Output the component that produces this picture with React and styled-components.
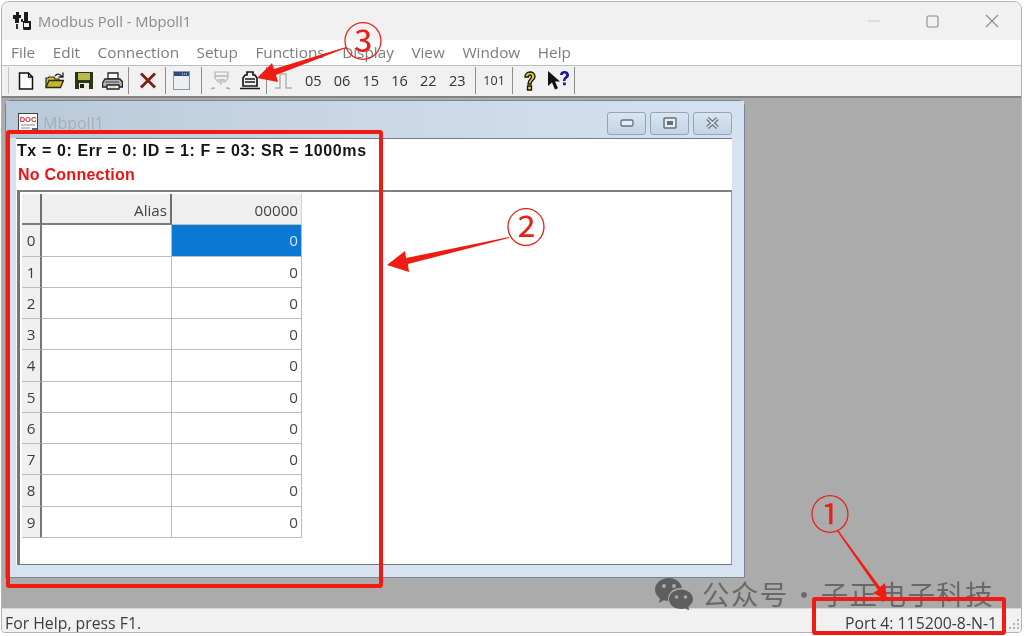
import styled, { createGlobalStyle } from "styled-components";

const GlobalStyle = createGlobalStyle`
  html, body {
    margin: 0;
    padding: 0;
    background: #fff;
    overflow: hidden;
  }
  body {
    font-family: "Open Sans", "Noto Sans", sans-serif;
  }
`;

const Page = styled.div`
  position: relative;
  width: 1025px;
  height: 636px;
  overflow: hidden;
  background: #fff;
  padding: 1px 3px 0 1px;
  box-sizing: border-box;
  filter: blur(0.45px);
`;

const AppWindow = styled.div`
  height: 632px;
  display: flex;
  flex-direction: column;
  border: 1px solid #b4b4b4;
  border-radius: 8px 8px 4px 4px;
  box-sizing: border-box;
  overflow: hidden;
  background: #f1f1f1;
`;

const TitleBar = styled.div`
  height: 38px;
  flex: none;
  display: flex;
  align-items: center;
  padding-left: 10px;
  background: #f1f1f1;
`;

const TitleText = styled.span`
  margin-left: 6px;
  font-size: 14.7px;
  color: #8b8b8b;
`;

const WindowControls = styled.div`
  margin-left: auto;
  display: flex;
  align-items: center;
  gap: 46px;
  padding-right: 22px;
`;

const MenuBar = styled.div`
  height: 26px;
  flex: none;
  display: flex;
  align-items: center;
  gap: 17.6px;
  padding: 0 0 2px 9px;
  box-sizing: border-box;
  background: #fff;
  border-bottom: 1px solid #bdbdbd;
`;

const MenuItem = styled.span`
  font-size: 15.3px;
  color: #7c7c7c;
`;

const ToolBar = styled.div`
  height: 32px;
  flex: none;
  display: flex;
  align-items: stretch;
  padding: 1px 0 2px 6px;
  box-sizing: border-box;
  background: #f1f1f1;
  border-bottom: 2px solid #838383;
`;

const ToolButton = styled.div`
  width: ${(p) => p.$w || 29}px;
  flex: none;
  display: flex;
  align-items: center;
  justify-content: center;
  font-size: ${(p) => (p.$small ? 12.5 : 14.5)}px;
  color: #333;
`;

const ToolSep = styled.div`
  width: 1px;
  flex: none;
  margin: 0 ${(p) => p.$after}px 0 ${(p) => p.$before}px;
  background: ${(p) => (p.$light ? "#c4c4c4" : "#8e8e8e")};
`;

const Desktop = styled.div`
  flex: 1;
  min-height: 0;
  background: #ababab;
  padding: 2px 0 0 3px;
`;

const ChildWindow = styled.div`
  width: 740px;
  height: 478px;
  display: flex;
  flex-direction: column;
  box-sizing: border-box;
  border: 1px solid #7a8490;
  border-radius: 6px 6px 0 0;
  background: #d7e3f1;
  padding: 0 12px 12px 10px;
`;

const ChildTitle = styled.div`
  height: 37px;
  flex: none;
  display: flex;
  align-items: center;
  margin: 0 -12px 0 -10px;
  padding: 7px 12px 0 12px;
  box-sizing: border-box;
  background: linear-gradient(90deg, #bac9d9 0%, #c9d7e6 50%, #d3e1f0 100%);
`;

const ChildName = styled.span`
  margin-left: 5px;
  font-size: 16px;
  color: #a6aeb7;
`;

const ChildButtons = styled.div`
  margin-left: auto;
  display: flex;
  gap: 4px;
`;

const ChildButton = styled.div`
  width: 39px;
  height: 23px;
  display: flex;
  align-items: center;
  justify-content: center;
  box-sizing: border-box;
  border: 1px solid #93a5b8;
  border-radius: 3px;
  background: linear-gradient(180deg, #d9e5f1, #c3d3e4);
`;

const ClientArea = styled.div`
  flex: 1;
  min-height: 0;
  display: flex;
  flex-direction: column;
  background: #fff;
  border-top: 1px solid #767c84;
`;

const InfoPane = styled.div`
  height: 51px;
  flex: none;
  box-sizing: border-box;
  padding: 0 0 0 1px;
  font-family: "Liberation Sans", Arial, sans-serif;
  font-weight: 700;
  font-size: 16px;
  letter-spacing: 0.6px;
  line-height: 24px;
  color: #151515;
`;

const InfoAlert = styled.div`
  padding-left: 1px;
  letter-spacing: 0.25px;
  color: #ee1111;
`;

const GridPane = styled.div`
  flex: 1;
  min-height: 0;
  margin-left: 1px;
  padding: 2px 0 0 2px;
  border-top: 2px solid #808080;
  border-left: 3px solid #777;
  border-bottom: 1px solid #777;
  border-right: 1px solid #999;
`;

const Grid = styled.div`
  display: grid;
  grid-template-columns: 20px 130px 130px;
  grid-auto-rows: 31.25px;
  width: 280px;
`;

const Cell = styled.div`
  display: flex;
  align-items: center;
  justify-content: flex-end;
  box-sizing: border-box;
  padding-right: 3px;
  font-size: 15.2px;
  color: #444;
  background: #fff;
  border-right: 1px solid #bcbcbc;
  border-bottom: 1px solid #bcbcbc;
`;

const HeadCell = styled(Cell)`
  padding-top: 2px;
  background: #efefef;
  border-right: ${(p) => (p.$dark ? "2px solid #6e6e6e" : "1px solid #d2d2d2")};
  border-bottom: ${(p) => (p.$dark ? "2px solid #7c7c7c" : "1px solid #bcbcbc")};
`;

const RowHead = styled(Cell)`
  justify-content: center;
  padding-right: 0;
  background: #f0f0f0;
  border-right: 2px solid #777;
  border-bottom: 1px solid #bdbdbd;
  color: #3c3c3c;
`;

const SelectedCell = styled(Cell)`
  background: #0b78d4;
  color: #cfe6fb;
`;

const StatusBar = styled.div`
  height: 24px;
  flex: none;
  display: flex;
  align-items: center;
  justify-content: space-between;
  box-sizing: border-box;
  padding: 5px 24px 0 3px;
  border-top: 1px solid #d8d8d8;
  background: #f1f1f1;
  font-size: 15.8px;
  color: #3d3d3d;
`;

const Grip = styled.svg`
  position: absolute;
  right: 5px;
  bottom: 6px;
`;

const RedBox = styled.div`
  position: absolute;
  left: ${(p) => p.$x}px;
  top: ${(p) => p.$y}px;
  width: ${(p) => p.$w}px;
  height: ${(p) => p.$h}px;
  box-sizing: border-box;
  border: 4px solid #f01c14;
  border-radius: 3px;
`;

const Marker = styled.span`
  position: absolute;
  left: ${(p) => p.$x}px;
  top: ${(p) => p.$y}px;
  font-family: "Noto Sans CJK SC", "Noto Sans", sans-serif;
  font-size: 40px;
  line-height: 40px;
  color: #e8201a;
`;

const ArrowLayer = styled.svg`
  position: absolute;
  left: 0;
  top: 0;
`;

const Watermark = styled.div`
  position: absolute;
  left: 655px;
  top: 575px;
  display: flex;
  align-items: center;
  gap: 9px;
  font-family: "Noto Sans CJK SC", sans-serif;
  font-size: 27.5px;
  letter-spacing: 1.4px;
  word-spacing: -6px;
  line-height: 36px;
  color: rgba(75, 75, 75, 0.7);
  white-space: nowrap;
`;

const AppIcon = () => (
  <svg width="20" height="20" viewBox="0 0 20 20">
    <path d="M1 4h3V1h3v3h2v3H7v5H3V8H1z" fill="#1c1c1c" />
    <path d="M4 13h2v5H4z" fill="#333" />
    <path d="M9 8h3V3h2v5h-3v3H9z" fill="#2a2a2a" />
    <path d="M12 1h4v9h3v7.500a1.500 1.500 0 0 1-1.500 1.500h-5a1.500 1.500 0 0 1-1.500-1.500V10h1z" fill="#1c1c1c" />
    <path d="M12 12h5v4h-5z" fill="#f1f1f1" />
  </svg>
);

const NewIcon = () => (
  <svg width="16" height="18" viewBox="0 0 16 18">
    <path d="M1.500 1h9l4 4v12h-13z" fill="#fff" stroke="#111" strokeWidth="1.500" />
    <path d="M10.500 1v4h4" fill="none" stroke="#111" strokeWidth="1.300" />
  </svg>
);

const OpenIcon = () => (
  <svg width="19" height="17" viewBox="0 0 19 17">
    <path d="M1 15V6h2l1-1h5l1 2h4v2" fill="#d0c13c" stroke="#2a2a10" strokeWidth="1.200" />
    <path d="M1 15.500l3-7h14.500l-3 7z" fill="#c4b62e" stroke="#2a2a10" strokeWidth="1.300" />
    <path d="M10 4c2-2.500 4-2.500 6-.5l1.500 1.500M18 .500v4.500h-4.500" fill="none" stroke="#222" strokeWidth="1.300" />
  </svg>
);

const SaveIcon = () => (
  <svg width="18" height="17" viewBox="0 0 18 17">
    <path d="M0 0h18v17H0z" fill="#2b3712" />
    <path d="M3 1h12v7H3z" fill="#b9bb4e" />
    <path d="M4 11h10v6H4z" fill="#e8e8e8" />
    <path d="M5 12h4v4H5z" fill="#1c2408" />
  </svg>
);

const PrintIcon = () => (
  <svg width="21" height="18" viewBox="0 0 21 18">
    <path d="M6 1h10v6H6z" fill="#fff" stroke="#222" strokeWidth="1.300" />
    <path d="M3 7h15l2.500 3v5H.500v-4z" fill="#b4b4b4" stroke="#222" strokeWidth="1.400" />
    <path d="M5 13h12v4H5z" fill="#fff" stroke="#222" strokeWidth="1.300" />
    <path d="M3 10h14" stroke="#444" strokeWidth="1.100" />
    <path d="M7 15h7" stroke="#c8c45a" strokeWidth="1.100" />
  </svg>
);

const CloseDocIcon = () => (
  <svg width="18" height="17" viewBox="0 0 18 17">
    <path d="M2 1.500l14 14M16 1.500l-14 14" stroke="#7e1d16" strokeWidth="2.800" />
  </svg>
);

const WindowIcon = () => (
  <svg width="17" height="19" viewBox="0 0 17 19">
    <path d="M.500 .500h16v18H.500z" fill="#eceef1" stroke="#8899ac" strokeWidth="1.100" />
    <path d="M1 1h15v4H1z" fill="#2b4a7d" />
    <path d="M9 3h1M11 3h1M13 3h1" stroke="#fff" strokeWidth="1" />
  </svg>
);

const PlugIcon = ({ color, faded }) => (
  <svg width="22" height="20" viewBox="0 0 22 20">
    <path
      d={faded ? "M5 1h13v6l-3 4H8L5 7z" : "M8 1h6v3h2l2 3v8H4V7l2-3h2z"}
      fill="none"
      stroke={color}
      strokeWidth={faded ? 1.2 : 1.7}
    />
    <path
      d={faded ? "M5 5h13M8 9h7M11 11v3" : "M6 8h10M6 11h10"}
      stroke={color}
      strokeWidth="1.300"
    />
    <path
      d={faded ? "M1 18l2-1h2M16 17h2l2 1" : "M1 17.500h20"}
      stroke={color}
      strokeWidth="1.500"
    />
  </svg>
);

const PulseIcon = () => (
  <svg width="20" height="18" viewBox="0 0 20 18">
    <path d="M1 16h5V2h6v14h6" fill="none" stroke="#b0b0b0" strokeWidth="1.400" />
  </svg>
);

const HelpIcon = () => (
  <svg width="16" height="22" viewBox="0 0 16 22">
    <path
      d="M3 7c0-3 2-5 5-5s5 2 5 4.500c0 4-4 3.500-4 7.500H6c0-5 3.500-4.500 3.500-7.500 0-1-.6-1.500-1.500-1.500-1 0-1.500 .8-1.500 2z"
      fill="#e2d21e"
      stroke="#111"
      strokeWidth="1.300"
    />
    <path d="M5.500 16h4v4h-4z" fill="#e2d21e" stroke="#111" strokeWidth="1.300" />
  </svg>
);

const ContextHelpIcon = () => (
  <svg width="24" height="22" viewBox="0 0 24 22">
    <path d="M1 1v15l4-3.500 3 7 3-1.300-3-6.700h5z" fill="#111" />
    <path
      d="M13 5c0-2.500 2-4 4.500-4S22 2.500 22 5c0 3.500-3.500 3-3.500 6H16c0-4 3-4 3-6 0-1-.6-1.500-1.500-1.500S16 4 16 5z"
      fill="#1c1c8c"
    />
    <path d="M16 12.500h2.800v2.800H16z" fill="#1c1c8c" />
  </svg>
);

const DocIcon = () => (
  <svg width="20" height="21" viewBox="0 0 20 21">
    <path d="M.500 .500h19v19H.500z" fill="#fff" stroke="#444" strokeWidth="1.100" />
    <text x="10" y="9" textAnchor="middle" fontFamily="Liberation Sans" fontWeight="700" fontSize="7.500" fill="#d42a2a">
      DOC
    </text>
    <path d="M3 12h14M3 15h9" stroke="#8a8a8a" strokeWidth="1" />
    <path d="M14 15h5v5h-5z" fill="#4d6f78" />
  </svg>
);

const WeChatIcon = () => (
  <svg width="38" height="33" viewBox="0 0 38 33">
    <path
      d="M14 1C6.500 1 0 6 0 12.500c0 3.800 2 6.800 5 9L3.800 26l5-2.700c1.500.5 3 .7 4.500.8C12 16 18 10.500 27 11 25.800 5.300 20.500 1 14 1z"
      fill="rgba(75,75,75,.8)"
    />
    <path
      d="M26 12.500c-6.500 0-12 4.300-12 9.800s5.500 9.800 12 9.800c1.300 0 2.700-.2 4-.6l4.500 2-1.200-3.800c2.800-1.900 4.700-4.500 4.700-7.400 0-5.500-5.500-9.800-12-9.800z"
      fill="rgba(75,75,75,.8)"
    />
    <circle cx="9" cy="9" r="2" fill="#ababab" />
    <circle cx="19" cy="9" r="2" fill="#ababab" />
    <circle cx="21.500" cy="20" r="1.800" fill="#ababab" />
    <circle cx="30.500" cy="20" r="1.800" fill="#ababab" />
  </svg>
);

const menus = ["File", "Edit", "Connection", "Setup", "Functions", "Display", "View", "Window", "Help"];
const rows = [0, 1, 2, 3, 4, 5, 6, 7, 8, 9];

const App = () => {
  return (
    <Page>
      <GlobalStyle />
      <AppWindow>
        <TitleBar>
          <AppIcon />
          <TitleText>Modbus Poll - Mbpoll1</TitleText>
          <WindowControls>
            <svg width="12" height="12" viewBox="0 0 12 12">
              <path d="M0 6h12" stroke="#c8c8c8" strokeWidth="1.200" />
            </svg>
            <svg width="13" height="13" viewBox="0 0 13 13">
              <rect x="1" y="1" width="11" height="11" rx="1.500" fill="none" stroke="#8a8a8a" strokeWidth="1.100" />
            </svg>
            <svg width="14" height="14" viewBox="0 0 14 14">
              <path d="M1 1l12 12M13 1L1 13" stroke="#8a8a8a" strokeWidth="1.100" />
            </svg>
          </WindowControls>
        </TitleBar>
        <MenuBar>
          {menus.map((m) => (
            <MenuItem key={m}>{m}</MenuItem>
          ))}
        </MenuBar>
        <ToolBar>
          <ToolSep $light $before={0} $after={2} />
          <ToolButton><NewIcon /></ToolButton>
          <ToolButton><OpenIcon /></ToolButton>
          <ToolButton><SaveIcon /></ToolButton>
          <ToolButton><PrintIcon /></ToolButton>
          <ToolSep $before={1} $after={4} />
          <ToolButton><CloseDocIcon /></ToolButton>
          <ToolSep $before={3} $after={1} />
          <ToolButton><WindowIcon /></ToolButton>
          <ToolSep $before={5} $after={4} />
          <ToolButton><PlugIcon color="#b4b4b4" faded /></ToolButton>
          <ToolButton><PlugIcon color="#1a1a1a" /></ToolButton>
          <ToolSep $before={2} $after={3} />
          <ToolButton $w={28.8}><PulseIcon /></ToolButton>
          {["05", "06", "15", "16", "22", "23"].map((n) => (
            <ToolButton key={n} $w={28.8}>{n}</ToolButton>
          ))}
          <ToolSep $before={3} $after={4} />
          <ToolButton $small>101</ToolButton>
          <ToolSep $before={3} $after={3} />
          <ToolButton><HelpIcon /></ToolButton>
          <ToolButton><ContextHelpIcon /></ToolButton>
          <ToolSep $before={0} $after={0} />
        </ToolBar>
        <Desktop>
          <ChildWindow>
            <ChildTitle>
              <DocIcon />
              <ChildName>Mbpoll1</ChildName>
              <ChildButtons>
                <ChildButton>
                  <svg width="14" height="8" viewBox="0 0 14 8">
                    <rect x="1" y="1" width="12" height="6" rx="1.500" fill="#e8edf2" stroke="#66707c" strokeWidth="1.300" />
                  </svg>
                </ChildButton>
                <ChildButton>
                  <svg width="14" height="12" viewBox="0 0 14 12">
                    <rect x="1" y="1" width="12" height="10" rx="1" fill="#e8edf2" stroke="#66707c" strokeWidth="1.500" />
                    <rect x="4" y="4" width="6" height="4" fill="#66707c" />
                  </svg>
                </ChildButton>
                <ChildButton>
                  <svg width="15" height="12" viewBox="0 0 15 12">
                    <path d="M2.500 1.500l10 9M12.500 1.500l-10 9" stroke="#66707c" strokeWidth="3.800" />
                    <path d="M2.500 1.500l10 9M12.500 1.500l-10 9" stroke="#e4e9ee" strokeWidth="1.600" />
                  </svg>
                </ChildButton>
              </ChildButtons>
            </ChildTitle>
            <ClientArea>
              <InfoPane>
                <div>Tx = 0: Err = 0: ID = 1: F = 03: SR = 1000ms</div>
                <InfoAlert>No Connection</InfoAlert>
              </InfoPane>
              <GridPane>
                <Grid>
                  <HeadCell $dark />
                  <HeadCell $dark>Alias</HeadCell>
                  <HeadCell>00000</HeadCell>
                  {rows.map((r) => [
                    <RowHead key={`h${r}`}>{r}</RowHead>,
                    <Cell key={`a${r}`} />,
                    r === 0 ? (
                      <SelectedCell key={`v${r}`}>0</SelectedCell>
                    ) : (
                      <Cell key={`v${r}`}>0</Cell>
                    ),
                  ])}
                </Grid>
              </GridPane>
            </ClientArea>
          </ChildWindow>
        </Desktop>
        <StatusBar>
          <span>For Help, press F1.</span>
          <span>Port 4: 115200-8-N-1</span>
        </StatusBar>
      </AppWindow>
      <Grip width="12" height="12" viewBox="0 0 12 12">
        <path d="M9 1h2v2H9zM5 5h2v2H5zM9 5h2v2H9zM1 9h2v2H1zM5 9h2v2H5zM9 9h2v2H9z" fill="#b5b5b5" />
      </Grip>
      <Watermark>
        <WeChatIcon />
        <span>公众号 · 子正电子科技</span>
      </Watermark>
      <RedBox $x={6} $y={130} $w={377} $h={458} />
      <RedBox $x={812} $y={597} $w={194} $h={38} />
      <ArrowLayer width="1025" height="636" viewBox="0 0 1025 636">
        <path d="M346 47L274 69l-2-6-15 15 21 4-2-7L346 48z" fill="#f01c14" />
        <path d="M509 237L406 258l-1-7-18 14 22 7-1-8L509 238z" fill="#f01c14" />
        <path d="M837 531L878 590l-5 3 14 7-2-17-5 4L838 530z" fill="#f01c14" />
      </ArrowLayer>
      <Marker $x={343} $y={19}>③</Marker>
      <Marker $x={506} $y={205}>②</Marker>
      <Marker $x={810} $y={492}>①</Marker>
    </Page>
  );
};

export default App;
